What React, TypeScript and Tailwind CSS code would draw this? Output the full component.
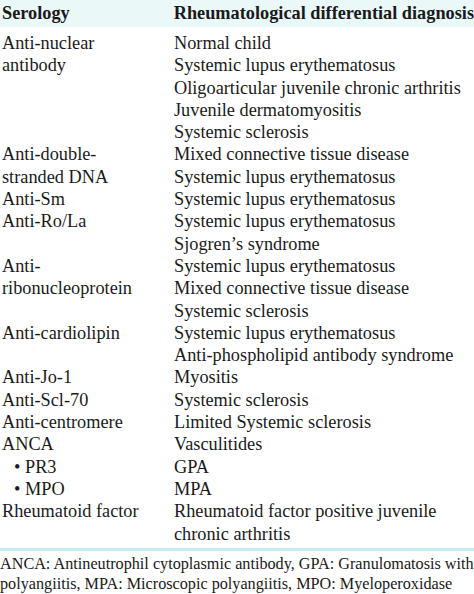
const rows: [string, string][] = [
  ["Anti-nuclear", "Normal child"],
  ["antibody", "Systemic lupus erythematosus"],
  ["", "Oligoarticular juvenile chronic arthritis"],
  ["", "Juvenile dermatomyositis"],
  ["", "Systemic sclerosis"],
  ["Anti-double-", "Mixed connective tissue disease"],
  ["stranded DNA", "Systemic lupus erythematosus"],
  ["Anti-Sm", "Systemic lupus erythematosus"],
  ["Anti-Ro/La", "Systemic lupus erythematosus"],
  ["", "Sjogren’s syndrome"],
  ["Anti-", "Systemic lupus erythematosus"],
  ["ribonucleoprotein", "Mixed connective tissue disease"],
  ["", "Systemic sclerosis"],
  ["Anti-cardiolipin", "Systemic lupus erythematosus"],
  ["", "Anti-phospholipid antibody syndrome"],
  ["Anti-Jo-1", "Myositis"],
  ["Anti-Scl-70", "Systemic sclerosis"],
  ["Anti-centromere", "Limited Systemic sclerosis"],
  ["ANCA", "Vasculitides"],
  ["• PR3", "GPA"],
  ["• MPO", "MPA"],
  ["Rheumatoid factor", "Rheumatoid factor positive juvenile"],
  ["", "chronic arthritis"],
]

export default function App() {
  return (
    <div className="w-[474px] h-[594px] overflow-hidden bg-white text-[#1a1a1a] font-['Liberation_Serif',serif]">
      <div className="flex h-[27px] items-center bg-[#eaf8f8] text-[18.3px] font-bold">
        <div className="w-[174px] pl-[2px]">Serology</div>
        <div className="whitespace-nowrap">Rheumatological differential diagnosis</div>
      </div>
      <div className="pt-[5px] text-[18.3px] leading-[22.3px]">
        {rows.map(([a, b], i) => (
          <div key={i} className="flex">
            <div className={a.startsWith("•") ? "w-[174px] pl-[14px]" : "w-[174px] pl-[2px]"}>{a}</div>
            <div className="whitespace-nowrap">{b}</div>
          </div>
        ))}
      </div>
      <div className="mt-[3px] h-[3px] bg-[#c4eeee]" />
      <div className="pt-[3px] text-[16.2px] leading-[20px] whitespace-nowrap">
        <div>ANCA: Antineutrophil cytoplasmic antibody, GPA: Granulomatosis with</div>
        <div>polyangiitis, MPA: Microscopic polyangiitis, MPO: Myeloperoxidase</div>
      </div>
    </div>
  )
}
